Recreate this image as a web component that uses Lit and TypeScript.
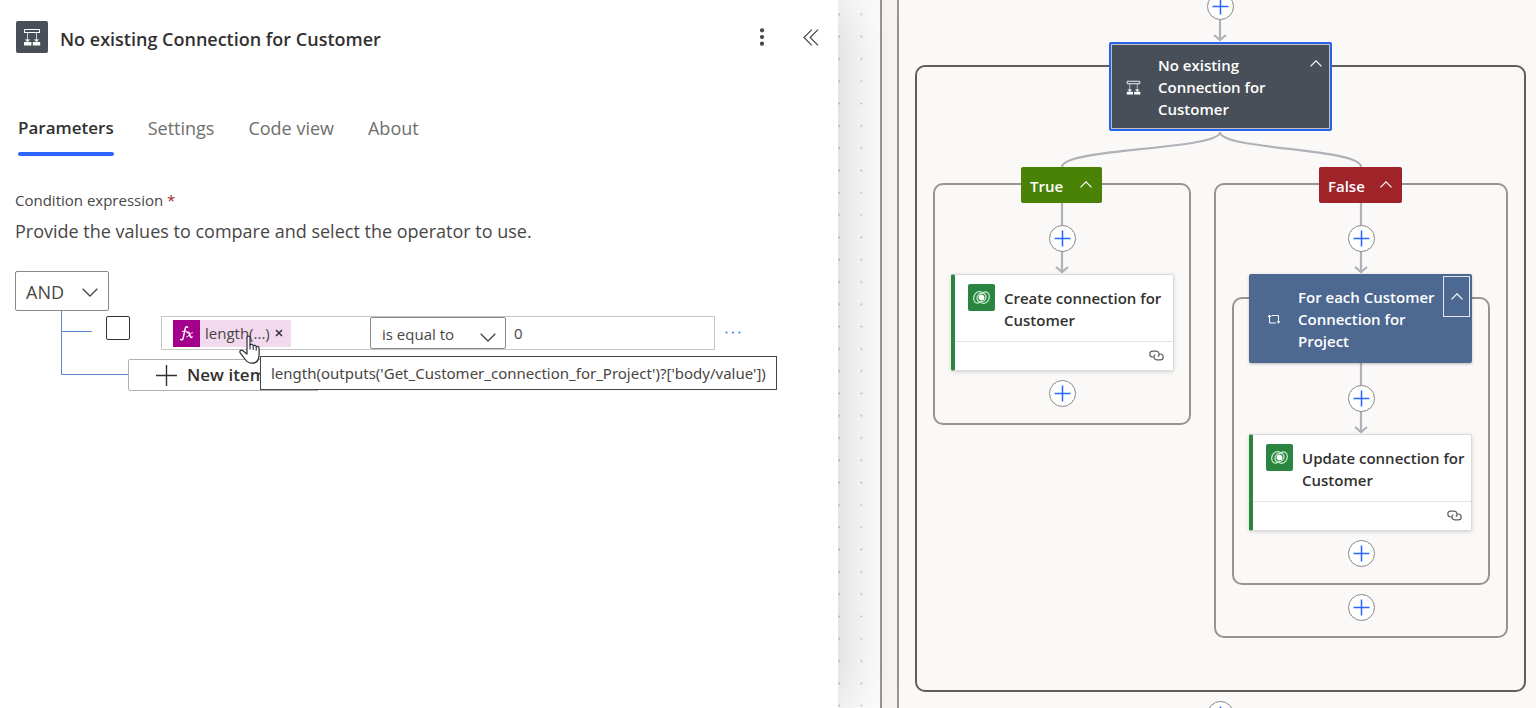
import { LitElement, html, css, svg, nothing } from "lit";
import { customElement, property } from "lit/decorators.js";

type Point = { x: number; y: number };
type Box = Point & { w: number; h: number };

const chevronDown = html`<svg class="chevron" viewBox="0 0 16 9" width="16" height="9" aria-hidden="true">
  <path d="M0.7 0.7 8 8 15.3 0.7" fill="none" stroke="currentColor" stroke-width="1.3" />
</svg>`;

const chevronUp = html`<svg viewBox="0 0 12 7" width="12" height="7" aria-hidden="true">
  <path d="M0.5 6.4 6 0.9 11.5 6.4" fill="none" stroke="currentColor" stroke-width="1.2" />
</svg>`;

const conditionIcon = (size: number) => html`<svg viewBox="0 0 18 18" width=${size} height=${size} aria-hidden="true">
  <path d="M1.500 1.500h15v3h-15z" fill="none" stroke="currentColor" stroke-width="1.100" />
  <path d="M4.500 4.500v8M13.500 4.500v8" stroke="currentColor" stroke-width="0.900" opacity="0.800" />
  <path d="M1.800 11.500h5.400L4.500 14zM10.800 11.500h5.400L13.500 14zM1 14h7.400v3.400H1zM9.800 14h7.400v3.400H9.800z" fill="currentColor" />
</svg>`;

const loopIcon = html`<svg viewBox="0 0 14 12" width="14" height="12" aria-hidden="true">
  <g fill="none" stroke="currentColor" stroke-width="1">
    <path d="M2.500 2.500V10h6.500M4.500 2.500h7V9" />
  </g>
  <path d="M0.500 4 2.500 1.500 4.500 4zM9.500 8.200h4L11.500 10.700z" fill="currentColor" />
</svg>`;

const dataverseIcon = html`<svg viewBox="0 0 27 27" width="27" height="27" aria-hidden="true">
  <rect width="27" height="27" rx="2" fill="#2a8540" />
  <g fill="none" stroke="#c9ecd0" stroke-width="1.200" stroke-linecap="round">
    <path d="M15.500 9.300C13.300 6.900 9.300 7.200 7.200 9.900 5 12.800 5.200 16.900 7.500 18.500c1.300.9 3 .7 4.200-.2" />
    <path d="M11.500 17.700c2.200 2.400 6.200 2.100 8.300-.6 2.200-2.900 2-7-.3-8.600-1.300-.9-3-.7-4.200.2" />
    <path d="M14.300 9.500c-2.700-.6-5.100 1.500-5.300 4.300-.1 1.800.8 3.300 2.500 3.900" />
    <path d="M12.700 17.500c2.700.6 5.100-1.500 5.300-4.300.1-1.800-.8-3.300-2.500-3.900" />
  </g>
  <path d="M11.200 11.200c1.300-1 2.900-.9 4.200 0 1.200.9 1.500 3.300.4 4.600-1.300 1-2.900.9-4.200 0-1.200-.9-1.500-3.300-.4-4.600z" fill="#fff" />
</svg>`;

const linkIcon = html`<svg viewBox="0 0 15 11" width="15" height="11" aria-hidden="true">
  <g fill="none" stroke="#605e5c" stroke-width="1.200">
    <path d="M5.500 7H3.700A2.900 2.900 0 0 1 3.700 1.200h3.500A2.900 2.900 0 0 1 8.700 6.600" />
    <path d="M9.500 4h1.800a2.900 2.900 0 0 1 0 5.800H7.800A2.900 2.900 0 0 1 6.300 4.400" />
  </g>
</svg>`;

@customElement("condition-panel")
export class ConditionPanel extends LitElement {
  static styles = css`
    :host {
      display: block;
      box-sizing: border-box;
      padding: 21px 15px 0 15px;
      background: #fff;
      color: #323130;
      box-shadow: 0 0 60px rgba(0, 0, 0, 0.2);
    }
    *, *::before { box-sizing: border-box; }
    button, select, input { font: inherit; color: inherit; margin: 0; }
    button { padding: 0; border: 0; background: none; }
    svg { display: block; }
    .head { display: flex; align-items: center; height: 32px; padding-left: 1px; }
    .glyph { display: grid; place-items: center; width: 32px; height: 32px; border-radius: 2px; background: #484f58; color: #fff; }
    .title { flex: 1; margin: 0 0 0 12px; padding-top: 3px; font-size: 18px; line-height: 24px; font-weight: 600; }
    .icon-button { display: grid; place-items: center; width: 24px; height: 32px; color: #484644; }
    .head .icon-button + .icon-button { margin-left: 25px; }
    .tabs { display: flex; gap: 34px; margin: 63px 0 0 3px; }
    .tab { padding-bottom: 12px; font-size: 18px; line-height: 24px; color: #706e6c; border-bottom: 4px solid transparent; }
    .tab.active { position: relative; color: #323130; font-size: 17px; font-weight: 600; }
    .tab.active::after { content: ""; position: absolute; left: 0; right: 0; bottom: -4px; height: 4px; border-radius: 2px; background: #2b65fb; }
    .field-label { margin: 33px 0 0; font-size: 15px; line-height: 22px; color: #484644; }
    .required { color: #a4262c; }
    .hint { margin: 7px 0 0; font-size: 18px; line-height: 26px; color: #484644; }
    .select { position: relative; display: flex; }
    .select select { appearance: none; width: 100%; background: #fff; border: 1px solid #8a8886; border-radius: 2px; outline: 0; }
    .select .chevron { position: absolute; pointer-events: none; color: #484644; }
    .operator { width: 94px; margin-top: 27px; }
    .operator select { height: 40px; padding: 2px 10px 0; font-size: 18px; color: #484644; }
    .operator .chevron { right: 11px; top: 17px; }
    .tree { list-style: none; margin: 0 0 0 46px; padding: 0; }
    .rule { display: flex; align-items: flex-start; height: 48px; padding-top: 5px; border-left: 1px solid #5b8bd0; }
    .branch { width: 30px; height: 1px; margin-top: 15px; background: #5b8bd0; }
    .check { appearance: none; width: 24px; height: 24px; margin-left: 14px; border: 1px solid #323130; border-radius: 2px; background: #fff; }
    .compare { flex: 1; display: grid; grid-template-columns: 1fr 136px 1fr; height: 34px; margin: 0 9px 0 31px; border: 1px solid #c8c6c4; font-size: 15px; color: #484644; }
    .operand { display: flex; align-items: center; padding: 0 11px; outline: 0; }
    .token { display: flex; align-items: center; height: 27px; background: #f2d9ee; padding-right: 7px; gap: 5px; }
    .fx { display: grid; place-items: center; width: 27px; height: 27px; background: #a3008c; color: #fff; }
    .remove { display: grid; place-items: center; width: 9px; height: 20px; }
    .comparison select { height: 32px; padding: 2px 11px 0; }
    .comparison .chevron { right: 10px; top: 16px; }
    .value { width: 100%; min-width: 0; border: 0; outline: 0; padding: 0 8px; background: none; }
    .more { width: 18px; height: 32px; margin-right: 81px; color: #3a86dd; display: grid; place-items: center; }
    .add { display: flex; }
    .elbow { width: 67px; height: 16px; border: solid #5b8bd0; border-width: 0 0 1px 1px; }
    .add-slot { position: relative; }
    .new-item { display: flex; align-items: center; gap: 10px; width: 191px; height: 32px; padding-left: 27px; border: 1px solid #b3b0ad; border-radius: 2px; background: #fff; font-size: 17px; font-weight: 600; }
    .tooltip { position: absolute; z-index: 2; left: 132px; top: -3px; height: 34px; padding: 0 10px; border: 1px solid #484644; background: #fff; font-family: "Noto Sans", "Open Sans", sans-serif; font-size: 15px; line-height: 32px; white-space: nowrap; color: #484644; }
    .pointer { position: absolute; z-index: 3; left: 110px; top: -24px; }
  `;

  @property({ type: String }) heading = "";

  render() {
    return html`
      <header class="head">
        <span class="glyph">${conditionIcon(18)}</span>
        <h1 class="title">${this.heading}</h1>
        <button class="icon-button" aria-label="More">
          <svg width="6" height="20" viewBox="0 0 6 20" fill="currentColor"><circle cx="3" cy="3.300" r="2.100" /><circle cx="3" cy="10" r="2.100" /><circle cx="3" cy="16.700" r="2.100" /></svg>
        </button>
        <button class="icon-button" aria-label="Collapse">
          <svg width="16" height="17" viewBox="0 0 16 17" fill="none" stroke="currentColor" stroke-width="1.200"><path d="M8.800 0.600 1 8.500l7.800 7.900M15 0.600 7.200 8.500l7.800 7.900" /></svg>
        </button>
      </header>
      <nav class="tabs" role="tablist">
        ${["Parameters", "Settings", "Code view", "About"].map(
          (name, i) => html`<button role="tab" aria-selected=${i === 0} class="tab ${i === 0 ? "active" : ""}">${name}</button>`
        )}
      </nav>
      <p class="field-label">Condition expression <span class="required">*</span></p>
      <p class="hint">Provide the values to compare and select the operator to use.</p>
      <div class="select operator">
        <select aria-label="Group operator"><option>AND</option><option>OR</option></select>
        ${chevronDown}
      </div>
      <ul class="tree">
        <li class="rule">
          <span class="branch"></span>
          <input class="check" type="checkbox" aria-label="Select row" />
          <div class="compare">
            <div class="operand">
              <span class="token">
                <span class="fx">
                  <svg width="15" height="18" viewBox="0 0 15 18" fill="none" stroke="#fff" stroke-linecap="round"><path d="M8.600 3.200c-.9-1-2.100-.3-2.500 1.600L4.200 14c-.4 1.900-1.700 2.300-2.600 1.400" stroke-width="1.400" /><path d="M3.500 7.300h4.200" stroke-width="1.100" /><path d="M8.200 8.600c1-.9 1.600-.4 2 .8l1 2.800c.4 1.200 1 1.600 1.900.8" stroke-width="1.500" /><path d="M13.400 8.500c-1.300-.3-4.300 4.700-5.600 4.600" stroke-width="1" /></svg>
                </span>
                <span>length(...)</span>
                <button class="remove" aria-label="Remove">
                  <svg width="8" height="8" viewBox="0 0 8 8" stroke="#323130" stroke-width="1.500"><path d="M1 1l6 6M7 1 1 7" /></svg>
                </button>
              </span>
            </div>
            <div class="select comparison">
              <select aria-label="Comparison"><option>is equal to</option><option>is not equal to</option></select>
              ${chevronDown}
            </div>
            <input class="value" aria-label="Value" value="0" />
          </div>
          <button class="more" aria-label="Row options">
            <svg width="16" height="3" viewBox="0 0 16 3" fill="currentColor"><circle cx="1.500" cy="1.500" r="1.100" /><circle cx="8" cy="1.500" r="1.100" /><circle cx="14.500" cy="1.500" r="1.100" /></svg>
          </button>
        </li>
        <li class="add">
          <span class="elbow"></span>
          <div class="add-slot">
            <button class="new-item">
              <svg width="21" height="21" viewBox="0 0 21 21" stroke="currentColor" stroke-width="1.400"><path d="M10.500 0v21M0 10.500h21" /></svg>
              New item
            </button>
            <div class="tooltip" role="tooltip">length(outputs('Get_Customer_connection_for_Project')?['body/value'])</div>
            <svg class="pointer" width="23" height="30" viewBox="0 0 23 30" aria-hidden="true">
              <path d="M9 2.600C9 .6 12 .6 12 2.600V10c1-1 3-.8 3.200.8 1-.9 2.700-.6 3 .9 1-.8 2.900-.3 2.900 1.500v6.300c0 5-2.300 8.700-7 8.700-3.600 0-5.300-1.300-7.200-4.200L2.200 17.800c-1.100-2 1-3.400 2.700-2.100L9 19z" fill="#fff" stroke="#2b2b3a" stroke-width="1.200" stroke-linejoin="round" />
              <path d="M12 9.500v5M15.200 11v4M18.200 12v3.500" stroke="#2b2b3a" stroke-width="1.100" />
            </svg>
          </div>
        </li>
      </ul>
    `;
  }
}

@customElement("flow-canvas")
export class FlowCanvas extends LitElement {
  static styles = css`
    :host { display: block; position: relative; overflow: hidden; background: #fcfcfc; }
    * { box-sizing: border-box; }
    button { font: inherit; color: inherit; margin: 0; padding: 0; border: 0; background: none; }
    svg { display: block; }
    .scene, .scope, .node, .plus, .badge { position: absolute; }
    .scene { left: 0; top: 0; }
    .scope { border: 2px solid #979593; border-radius: 10px; background: #faf9f8; }
    .scope.selected { border-color: #605e5c; }
    .scope.shade { background: #f5f4f3; }
    .plus { display: grid; place-items: center; width: 27px; height: 27px; border: 1px solid #8a8886; border-radius: 50%; background: #fff; color: #2b65fb; }
    .badge { display: flex; align-items: center; justify-content: space-between; height: 36px; padding: 2px 10px 0 9px; border-radius: 2px; color: #fff; font-weight: 600; }
    .badge.yes { background: #498205; }
    .badge.no { background: #9e2429; }
    .badge button { padding-bottom: 3px; }
    .node { border-radius: 2px; font-weight: 600; }
    .block { display: flex; height: 89px; padding-top: 12px; color: #fff; box-shadow: 0 1px 3px rgba(0, 0, 0, 0.25); }
    .condition { background: #484f58; border: 2px solid #2563eb; box-shadow: inset 0 0 0 1px #c0c0c0; padding-top: 10px; }
    .loop { background: #4d6891; }
    .lead { display: grid; place-items: center; width: 49px; height: 66px; }
    .condition .lead { width: 47px; padding-right: 2px; }
    .label { flex: 1; }
    .toggle { display: grid; place-items: center; width: 27px; height: 41px; margin: -10px 2px 0 0; }
    .condition .toggle { margin: -11px 1px 0 0; }
    .toggle.focused { border: 1px solid #e1e6ee; }
    .card { height: 97px; background: #fff; color: #323130; border: 1px solid #dddbd9; border-left: 4px solid #2a8540; box-shadow: 0 1px 4px rgba(0, 0, 0, 0.15); }
    .card-body { display: flex; gap: 9px; height: 67px; padding: 9px 0 0 13px; border-bottom: 1px solid #e5e4e2; }
    .card-label { padding-top: 3px; }
    .card-foot { display: flex; align-items: center; justify-content: flex-end; height: 27px; padding-right: 9px; }
  `;

  private scopes: (Box & { kind: string })[] = [
    { x: 42, y: -40, w: 760, h: 860, kind: "shade" },
    { x: 59, y: -30, w: 740, h: 840, kind: "" },
    { x: 77, y: 65, w: 611, h: 627, kind: "selected" },
    { x: 95, y: 183, w: 258, h: 242, kind: "" },
    { x: 376, y: 183, w: 294, h: 455, kind: "" },
    { x: 394, y: 297, w: 258, h: 288, kind: "" },
  ];

  private adders: Point[] = [
    { x: 382, y: 7 }, { x: 224, y: 239 }, { x: 224, y: 394 }, { x: 523, y: 239 },
    { x: 523, y: 399 }, { x: 523, y: 554 }, { x: 523, y: 608 }, { x: 382, y: 715 },
  ];

  private arrows = [
    { x: 382, from: 20, to: 41 }, { x: 224, from: 202, to: 273 },
    { x: 523, from: 202, to: 273 }, { x: 523, from: 363, to: 433 },
  ];

  private place(p: Point, w?: number, h?: number) {
    return `left:${p.x}px;top:${p.y}px;${w ? `width:${w}px;` : ""}${h ? `height:${h}px` : ""}`;
  }

  private badge(p: Point, w: number, tone: string, text: string) {
    return html`<div class="badge ${tone}" style=${this.place(p, w)}>
      <span>${text}</span><button aria-label="Collapse ${text}">${chevronUp}</button>
    </div>`;
  }

  private block(p: Point, kind: string, icon: unknown, lines: string[], focused = false) {
    return html`<div class="node block ${kind}" style=${this.place(p, 223)}>
      <span class="lead">${icon}</span>
      <span class="label">${lines.map((l, i) => html`${i ? html`<br />` : nothing}${l}`)}</span>
      <button class="toggle ${focused ? "focused" : ""}" aria-label="Collapse">${chevronUp}</button>
    </div>`;
  }

  private card(p: Point, lines: string[]) {
    return html`<div class="node card" style=${this.place(p, 223)}>
      <div class="card-body">${dataverseIcon}<span class="card-label">${lines[0]}<br />${lines[1]}</span></div>
      <div class="card-foot">${linkIcon}</div>
    </div>`;
  }

  render() {
    return html`
      <svg class="scene" width="100%" height="100%" aria-hidden="true">
        <defs><pattern id="dots" x="0" y="3.200" width="22.300" height="22.300" patternUnits="userSpaceOnUse"><circle cx="1.200" cy="11.100" r="0.900" fill="#bdbdbd" /></pattern></defs>
        <rect width="100%" height="100%" fill="url(#dots)" />
      </svg>
      ${this.scopes.map((s) => html`<div class="scope ${s.kind}" style=${this.place(s, s.w, s.h)}></div>`)}
      <svg class="scene" width="100%" height="100%" fill="none" stroke="#b1b1b7" stroke-width="2.200" aria-hidden="true">
        ${this.arrows.map((a) => svg`<path d="M${a.x} ${a.from}V${a.to}M${a.x - 6} ${a.to - 6}l6 5 6-5" />`)}
        <path d="M382 132C382 150 224 148 224 167M382 132C382 150 523 148 523 167" />
      </svg>
      ${this.adders.map(
        (p) => html`<button class="plus" aria-label="Add action" style=${this.place({ x: p.x - 13, y: p.y - 14 })}>
          <svg width="17" height="17" viewBox="0 0 17 17" stroke="currentColor" stroke-width="1.500"><path d="M8.500 0.500v16M0.500 8.500h16" /></svg>
        </button>`
      )}
      ${this.badge({ x: 183, y: 167 }, 81, "yes", "True")}
      ${this.badge({ x: 481, y: 167 }, 83, "no", "False")}
      ${this.block({ x: 271, y: 42 }, "condition", conditionIcon(15), ["No existing", "Connection for", "Customer"])}
      ${this.block({ x: 411, y: 274 }, "loop", loopIcon, ["For each Customer", "Connection for", "Project"], true)}
      ${this.card({ x: 113, y: 274 }, ["Create connection for", "Customer"])}
      ${this.card({ x: 411, y: 434 }, ["Update connection for", "Customer"])}
    `;
  }
}

@customElement("app-root")
export class AppRoot extends LitElement {
  static styles = css`
    :host {
      display: grid;
      grid-template-columns: 838fr 698fr;
      height: 100vh;
      overflow: hidden;
      font-family: "Open Sans", "Noto Sans", sans-serif;
      font-size: 15px;
      line-height: 22px;
    }
    condition-panel { position: relative; z-index: 1; }
  `;

  render() {
    return html`
      <condition-panel heading="No existing Connection for Customer"></condition-panel>
      <flow-canvas></flow-canvas>
    `;
  }
}
